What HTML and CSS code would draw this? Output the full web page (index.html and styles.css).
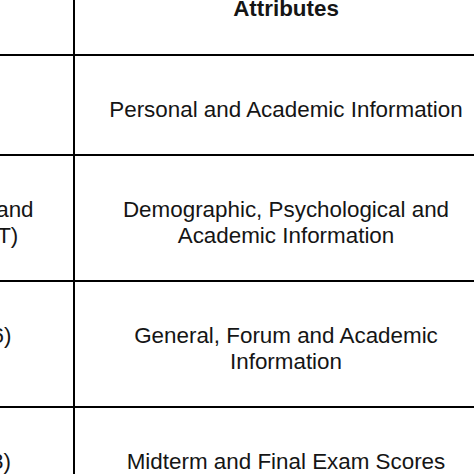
FILE: index.html
```html
<!DOCTYPE html>
<html lang="en">
<head>
<meta charset="utf-8">
<title>Datasets and Attributes</title>
<link rel="stylesheet" href="styles.css">
</head>
<body>
<div class="table">
  <div class="cell col1 head">Dataset</div>
  <div class="cell col2 head">Attributes</div>
  <div class="cell col1">xAPI-Edu-Data</div>
  <div class="cell col2">Personal and Academic Information</div>
  <div class="cell col1">Students' Data, Cortez and<br>Silva, 2008 (STUDENT)</div>
  <div class="cell col2">Demographic, Psychological and<br>Academic Information</div>
  <div class="cell col1">MOOC Dataset (2016)<br>Stanford University</div>
  <div class="cell col2">General, Forum and Academic<br>Information</div>
  <div class="cell col1">Course Grades (2013)</div>
  <div class="cell col2">Midterm and Final Exam Scores</div>
</div>
</body>
</html>
```
FILE: styles.css
```css
html, body {
  margin: 0;
  padding: 0;
  overflow: hidden;
  background: #fff;
}
body {
  font-family: "Liberation Sans", Arial, sans-serif;
  font-size: 22.4px;
  line-height: 26px;
  color: #151515;
}
.table {
  display: grid;
  grid-template-columns: 349px 422px;
  grid-template-rows: 103px 100px 126px 126px 100px;
  width: 771px;
  margin-left: -274px;
  margin-top: -47px;
}
.cell {
  display: flex;
  align-items: center;
  justify-content: center;
  text-align: center;
  white-space: nowrap;
  box-sizing: border-box;
  padding-top: 10px;
  border-bottom: 2px solid #000;
}
.col1 {
  border-right: 2px solid #000;
}
.head {
  font-weight: bold;
}
```
